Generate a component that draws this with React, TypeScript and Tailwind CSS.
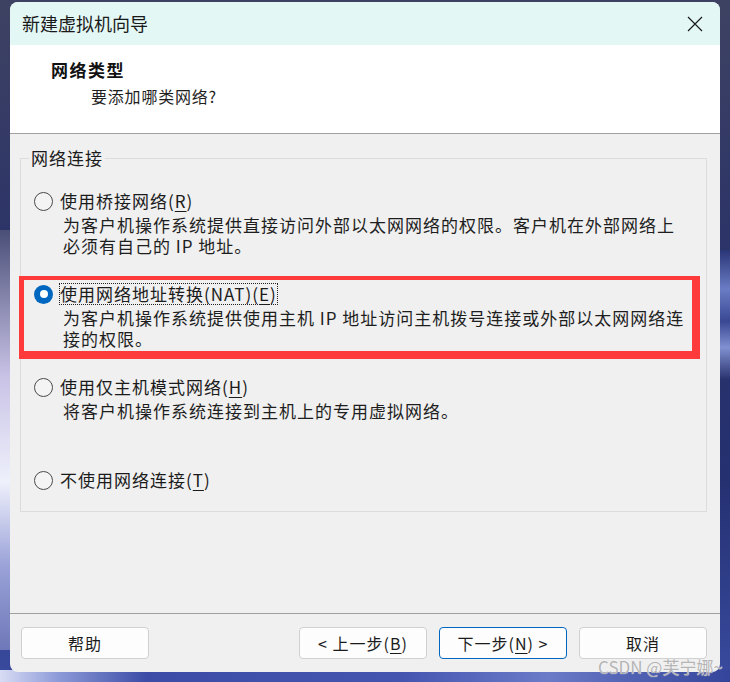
import React from "react";

const FONT = '"Noto Sans CJK SC", "Noto Sans", sans-serif';

type OptionProps = {
  label: React.ReactNode;
  desc?: string[];
  checked?: boolean;
  focused?: boolean;
};

function Radio({ checked }: { checked?: boolean }) {
  if (checked) {
    return (
      <span className="flex h-[19px] w-[19px] shrink-0 items-center justify-center rounded-full bg-[#0067c0]">
        <span className="h-[8px] w-[8px] rounded-full bg-white" />
      </span>
    );
  }
  return (
    <span className="h-[19px] w-[19px] shrink-0 rounded-full border border-[#4a4a4a] bg-[#f4f4f4]" />
  );
}

function Option({ label, desc = [], checked, focused }: OptionProps) {
  return (
    <div className="h-[93px]">
      <div className="flex h-[22px] items-center gap-[7px]">
        <Radio checked={checked} />
        <span
          className={
            "whitespace-nowrap text-[17px] leading-[20px] tracking-[1px] text-[#1b1b1b] " +
            (focused ? "outline-1 outline-dotted outline-[#222] outline-offset-[0px]" : "")
          }
        >
          {label}
        </span>
      </div>
      {desc.length > 0 && (
        <p className="mt-[2px] whitespace-nowrap pl-[29px] text-[17px] leading-[21px] tracking-[1px] text-[#1e1e1e]">
          {desc.map((d, i) => (
            <React.Fragment key={d}>
              {i > 0 && <br />}
              {d}
            </React.Fragment>
          ))}
        </p>
      )}
    </div>
  );
}

function Btn({
  children,
  primary,
}: {
  children: React.ReactNode;
  primary?: boolean;
}) {
  return (
    <button
      className={
        "flex h-[32px] w-[128px] items-center justify-center rounded-[4px] border bg-[#fdfdfd] text-[16px] tracking-[1px] text-[#1b1b1b] " +
        (primary ? "border-[#0067c0]" : "border-[#d0d0d0]")
      }
    >
      {children}
    </button>
  );
}

function U({ children }: { children: React.ReactNode }) {
  return <span className="underline decoration-1 underline-offset-[3px]">{children}</span>;
}

export default function App() {
  return (
    <div
      className="relative h-[682px] w-[730px] overflow-hidden bg-[linear-gradient(180deg,#3e4262_0%,#2c3468_35%,#243070_70%,#3a4ba0_100%)] pl-[10px] pt-[2px]"
      style={{ fontFamily: FONT }}
    >
      {/* wallpaper streaks */}
      <div className="absolute left-0 top-[230px] h-[420px] w-[14px] bg-[linear-gradient(180deg,#4a4f78_0%,#c9c3e6_35%,#eef0fb_60%,#9aa2d8_80%,#6f78b8_100%)]" />
      <div className="absolute right-0 top-[250px] h-[130px] w-[12px] bg-[linear-gradient(180deg,#2a3576_0%,#6a7cc4_30%,#3a4894_55%,#8090d0_75%,#27316c_100%)]" />
      <div className="absolute bottom-0 left-0 h-[12px] w-[730px] bg-[linear-gradient(90deg,#d8dcf4_0%,#8d9ad8_8%,#3c4ca6_20%,#4455b0_55%,#6b7bc8_75%,#34449a_100%)]" />

      <div className="relative flex h-[670px] w-[710px] flex-col overflow-hidden rounded-[8px] bg-[#f0f0f0]">
        {/* title bar */}
        <div className="flex h-[43px] shrink-0 items-center justify-between bg-[#e3f7f5] pl-[12px] pr-[17px]">
          <span className="text-[18px] text-[#1a1a1a]">新建虚拟机向导</span>
          <svg width="16" height="16" viewBox="0 0 16 16" className="mt-[1px]">
            <path d="M1 1 L15 15 M15 1 L1 15" stroke="#1a1a1a" strokeWidth="1.2" />
          </svg>
        </div>

        {/* header */}
        <div className="h-[89px] shrink-0 border-b border-[#a0a0a0] bg-white pt-[13px]">
          <div className="pl-[41px] text-[17px] font-bold leading-[24px] tracking-[1.5px] text-[#111]">
            网络类型
          </div>
          <div className="mt-[2px] pl-[81px] text-[16px] leading-[24px] tracking-[0.8px] text-[#1e1e1e]">
            要添加哪类网络?
          </div>
        </div>

        {/* body */}
        <div className="flex-1 pl-[10px] pr-[13px] pt-[24px]">
          <div className="relative h-[354px] border border-[#dcdcdc] pl-[13px] pt-[31px]">
            <span className="absolute left-[8px] top-[-12px] bg-[#f0f0f0] px-[2px] text-[17px] leading-[22px] tracking-[1px] text-[#1b1b1b]">
              网络连接
            </span>

            <Option
              label={
                <>
                  使用桥接网络(<U>R</U>)
                </>
              }
              desc={[
                "为客户机操作系统提供直接访问外部以太网网络的权限。客户机在外部网络上",
                "必须有自己的 IP 地址。",
              ]}
            />
            <Option
              checked
              focused
              label={
                <>
                  使用网络地址转换(NAT)(<U>E</U>)
                </>
              }
              desc={[
                "为客户机操作系统提供使用主机 IP 地址访问主机拨号连接或外部以太网网络连",
                "接的权限。",
              ]}
            />
            <Option
              label={
                <>
                  使用仅主机模式网络(<U>H</U>)
                </>
              }
              desc={["将客户机操作系统连接到主机上的专用虚拟网络。"]}
            />
            <Option
              label={
                <>
                  不使用网络连接(<U>T</U>)
                </>
              }
            />

            {/* red annotation box */}
            <div className="absolute left-[-2px] top-[117px] h-[83px] w-[681px] border-b-[8px] border-l-[5px] border-r-[8px] border-t-[4px] border-[#fe3a3a]" />
          </div>
        </div>

        {/* footer */}
        <div className="flex h-[59px] shrink-0 items-start justify-between border-t border-[#a0a0a0] pl-[11px] pr-[13px] pt-[13px]">
          <Btn>帮助</Btn>
          <div className="flex gap-[12px]">
            <Btn>
              &lt; 上一步(<U>B</U>)
            </Btn>
            <Btn primary>
              下一步(<U>N</U>) &gt;
            </Btn>
            <Btn>取消</Btn>
          </div>
        </div>
      </div>

      {/* watermark */}
      <div className="absolute left-[598px] top-[657px] text-[17px] leading-[20px] text-[#b4b4b4] [text-shadow:0_0_1px_#ffffff]">
        CSDN @芙宁娜~
      </div>
    </div>
  );
}
